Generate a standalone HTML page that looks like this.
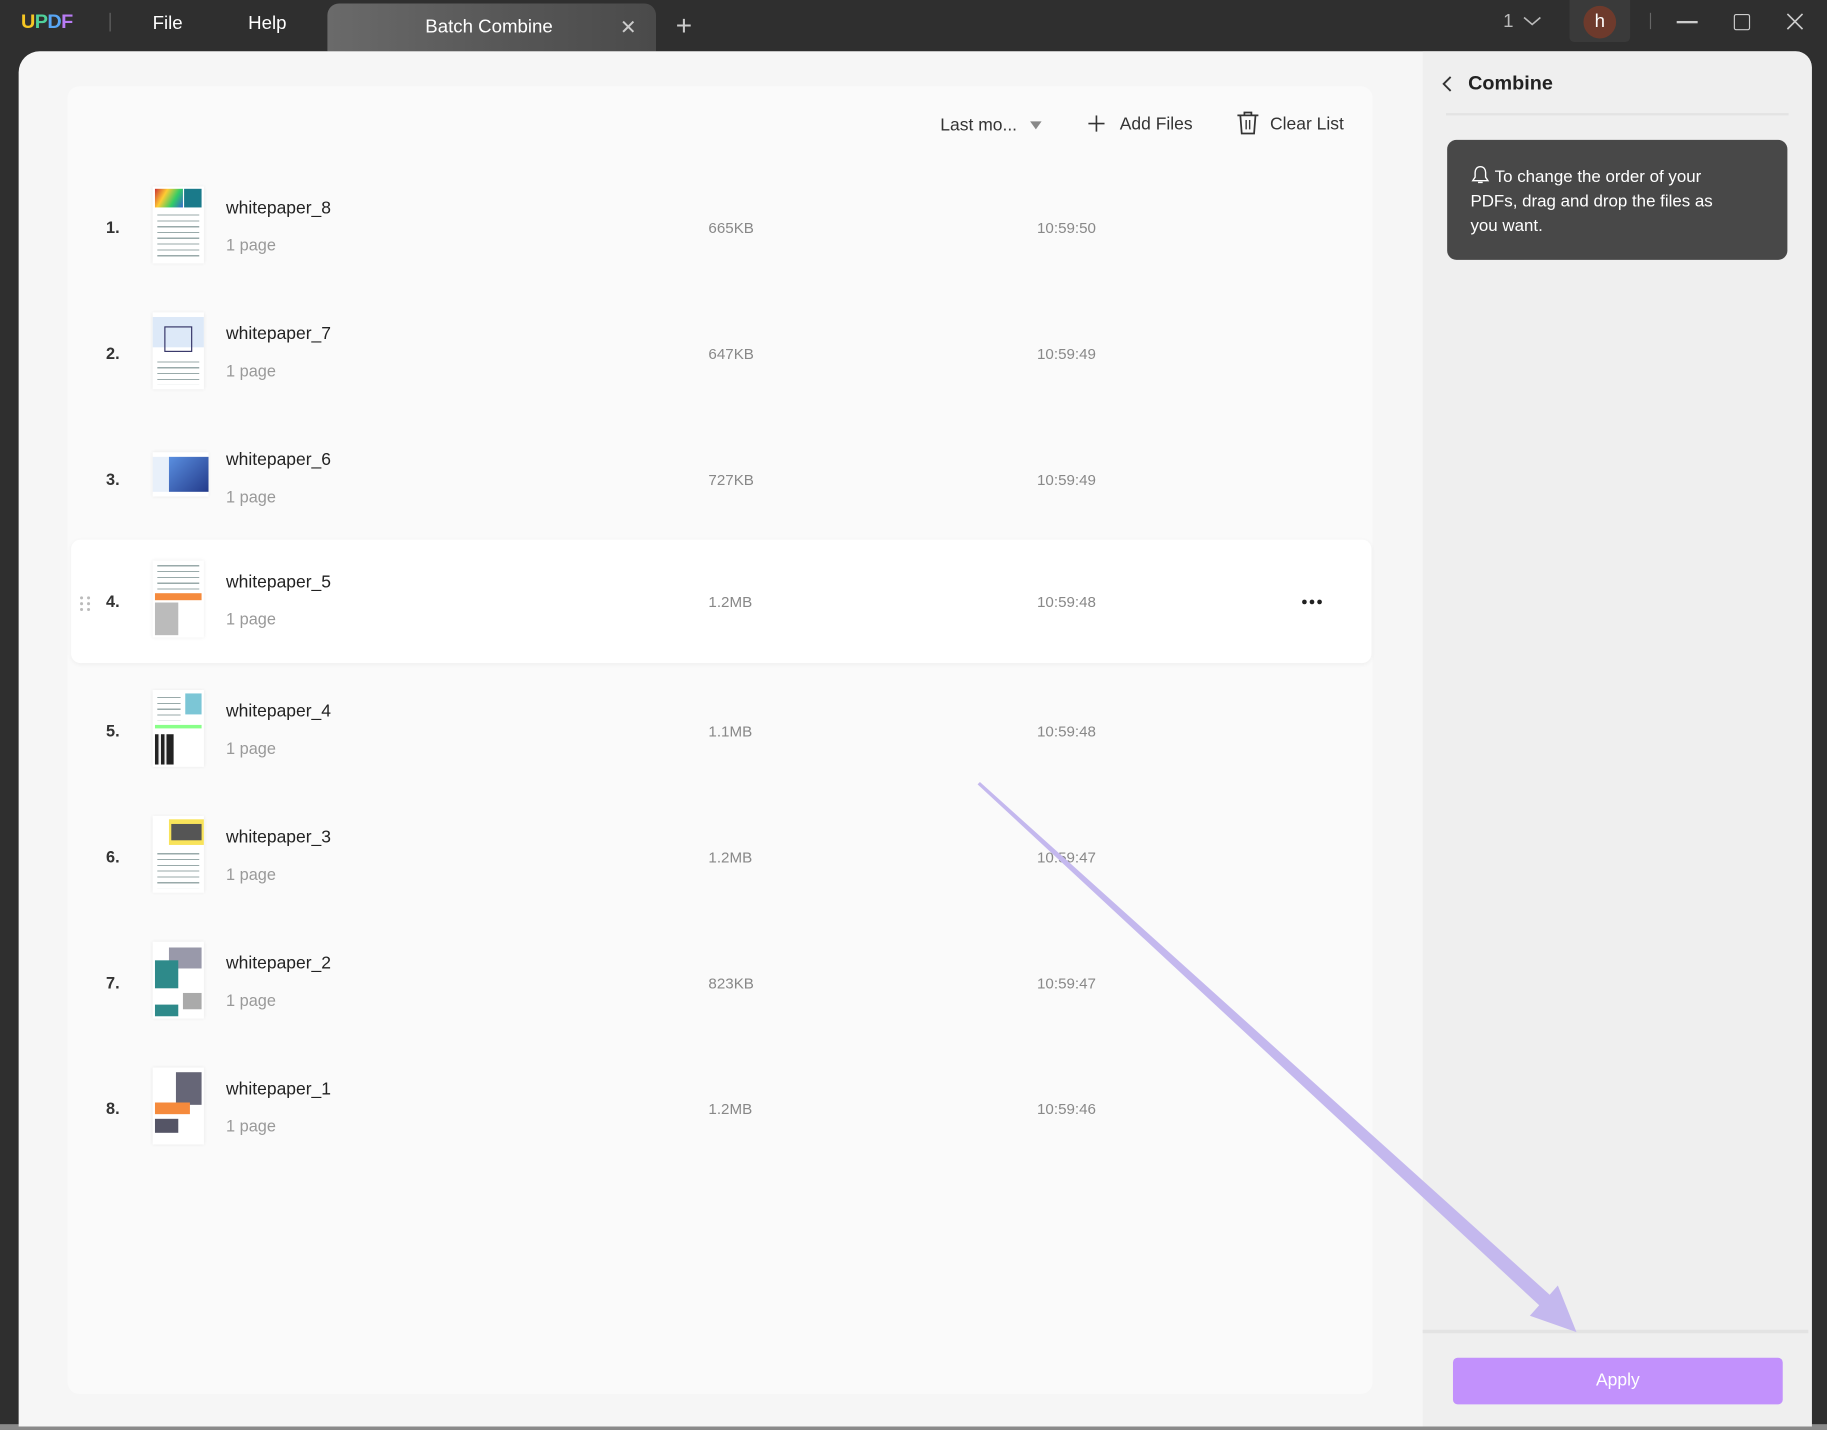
<!DOCTYPE html>
<html><head><meta charset="utf-8"><style>
html,body{margin:0;padding:0;width:1827px;height:1430px;overflow:hidden;background:#2f2f2f}
#s{position:absolute;left:0;top:0;width:1568px;height:1227px;transform:scale(1.16518,1.16544);transform-origin:0 0;font-family:"Liberation Sans",sans-serif;background:#2f2f2f}
.a{position:absolute}
.t{color:#fff;font-size:16px}
.row{position:absolute;left:61px;width:1116px;height:106px}
.num{position:absolute;left:30px;top:45px;font-size:14px;font-weight:bold;color:#333}
.th{position:absolute;left:70px;top:18px;width:44px;height:66px;background:#fff;box-shadow:0 0 3px rgba(0,0,0,.08);overflow:hidden}
.tx{position:absolute;left:4px;right:4px;height:40px;background:repeating-linear-gradient(#fff 0 2px,#9aa 2px 3px,#fff 3px 5px)}
.nm{position:absolute;left:133px;top:28px;font-size:15px;color:#222}
.pg{position:absolute;left:133px;top:60px;font-size:14px;color:#999}
.sz{position:absolute;left:547px;top:46px;font-size:13px;color:#888}
.tm{position:absolute;left:829px;top:46px;font-size:13px;color:#888}
</style></head><body><div id="s">
<div class="a" style="left:18px;top:9px;font-size:17px;font-weight:bold;letter-spacing:-0.5px"><span style="color:#f5c623">U</span><span style="color:#4fd19b">P</span><span style="color:#58a6f5">D</span><span style="color:#b97cf5">F</span></div>
<div class="a" style="left:94px;top:11px;width:1px;height:16px;background:#666"></div>
<div class="a t" style="left:131px;top:12px">File</div>
<div class="a t" style="left:213px;top:12px">Help</div>
<div class="a" style="left:281px;top:3px;width:282px;height:41px;border-radius:10px 10px 0 0;background:linear-gradient(90deg,#6a6a6a,#555 60%,#4a4a4a)"></div>
<div class="a t" style="left:365px;top:15px;font-size:16px">Batch Combine</div>
<div class="a t" style="left:532px;top:14px;font-size:17px;color:#ccc">✕</div>
<div class="a t" style="left:580px;top:9px;font-size:24px;color:#ccc;font-weight:300">+</div>
<div class="a t" style="left:1290px;top:10px;color:#bbb">1</div>
<svg class="a" style="left:1307px;top:13px" width="16" height="10"><path d="M1 2l7 6 7-6" stroke="#bbb" fill="none" stroke-width="1.4"/></svg>
<div class="a" style="left:1347px;top:0;width:52px;height:36px;background:#3a3a3a;border-radius:0 0 4px 4px"></div>
<div class="a" style="left:1359px;top:5px;width:28px;height:28px;border-radius:50%;background:#6e3a2c;color:#fff;font-size:16px;text-align:center;line-height:27px">h</div>
<div class="a" style="left:1416px;top:11px;width:1px;height:14px;background:#666"></div>
<div class="a" style="left:1439px;top:18px;width:18px;height:1.5px;background:#ccc"></div>
<div class="a" style="left:1488px;top:12px;width:12px;height:12px;border:1.5px solid #ccc;border-radius:2px"></div>
<svg class="a" style="left:1533px;top:11px" width="15" height="15"><path d="M1 1l13 13M14 1L1 14" stroke="#ccc" stroke-width="1.4"/></svg>
<div class="a" style="left:0;top:1222px;width:1568px;height:5px;background:#8a8a8a"></div>
<div class="a" style="left:16px;top:44px;width:1539px;height:1180px;background:#f6f6f6;border-radius:18px 14px 0 0;overflow:hidden">
  <div class="a" style="left:1205px;top:0;width:334px;height:1180px;background:#efefef"></div>
</div>
<div class="a" style="left:58px;top:74px;width:1120px;height:1122px;background:#fafafa;border-radius:10px"></div>
<div class="a" style="left:807px;top:99px;font-size:15px;color:#333">Last mo...</div>
<svg class="a" style="left:884px;top:104px" width="10" height="7"><path d="M0 0h10L5 7z" fill="#888"/></svg>
<svg class="a" style="left:934px;top:99px" width="14" height="14"><path d="M7 0v14M0 7h14" stroke="#333" stroke-width="1.4"/></svg>
<div class="a" style="left:961px;top:98px;font-size:15px;color:#333">Add Files</div>
<svg class="a" style="left:1061px;top:95px" width="20" height="21"><path d="M1 4h18M7 4V1.5h6V4M3.5 4l1.2 15.5h10.6L16.5 4" stroke="#333" stroke-width="1.5" fill="none"/><path d="M8.5 8v8M11.5 8v8" stroke="#333" stroke-width="1.2"/></svg>
<div class="a" style="left:1090px;top:98px;font-size:15px;color:#333">Clear List</div>
<div class="row" style="top:142px"><div class="num">1.</div><div class="th"><div class="a" style="left:2px;top:2px;width:24px;height:16px;background:linear-gradient(120deg,#c33,#fc3,#3c6,#36c)"></div><div class="a" style="left:27px;top:2px;width:15px;height:16px;background:#1a7a8a"></div><div class="tx" style="top:22px"></div></div><div class="nm">whitepaper_8</div><div class="pg">1 page</div><div class="sz">665KB</div><div class="tm">10:59:50</div></div>
<div class="row" style="top:250px"><div class="num">2.</div><div class="th"><div class="a" style="left:0;top:4px;width:44px;height:26px;background:#dde9f8"></div><div class="a" style="left:10px;top:12px;width:22px;height:20px;border:1px solid #336"></div><div class="tx" style="top:40px;height:22px"></div></div><div class="nm">whitepaper_7</div><div class="pg">1 page</div><div class="sz">647KB</div><div class="tm">10:59:49</div></div>
<div class="row" style="top:358px"><div class="num">3.</div><div class="th" style="top:30px;height:38px;width:48px"><div class="a" style="left:0;top:4px;width:14px;height:30px;background:#e8f0fa"></div><div class="a" style="left:14px;top:4px;width:34px;height:30px;background:linear-gradient(135deg,#5a8fe0,#233a8a)"></div></div><div class="nm">whitepaper_6</div><div class="pg">1 page</div><div class="sz">727KB</div><div class="tm">10:59:49</div></div>
<div class="row" style="top:463px;background:#fff;border-radius:8px;box-shadow:0 1px 4px rgba(0,0,0,.05)"><svg class="a" style="left:7px;top:48px" width="10" height="14"><g fill="#bbb"><circle cx="2" cy="2" r="1.3"/><circle cx="8" cy="2" r="1.3"/><circle cx="2" cy="7" r="1.3"/><circle cx="8" cy="7" r="1.3"/><circle cx="2" cy="12" r="1.3"/><circle cx="8" cy="12" r="1.3"/></g></svg><div class="num">4.</div><div class="th"><div class="tx" style="top:2px;height:24px"></div><div class="a" style="left:2px;top:28px;width:40px;height:6px;background:#f58a3c"></div><div class="a" style="left:2px;top:36px;width:20px;height:28px;background:#bbb"></div></div><div class="nm">whitepaper_5</div><div class="pg">1 page</div><div class="sz">1.2MB</div><div class="tm">10:59:48</div><svg class="a" style="left:1056px;top:51px" width="18" height="5"><g fill="#222"><circle cx="2.5" cy="2.5" r="2"/><circle cx="9" cy="2.5" r="2"/><circle cx="15.5" cy="2.5" r="2"/></g></svg></div>
<div class="row" style="top:574px"><div class="num">5.</div><div class="th"><div class="tx" style="top:4px;height:22px;right:20px"></div><div class="a" style="left:28px;top:3px;width:14px;height:18px;background:#7cc6d6"></div><div class="a" style="left:2px;top:30px;width:40px;height:3px;background:#8f8"></div><div class="a" style="left:2px;top:38px;width:16px;height:26px;background:linear-gradient(90deg,#222 0 3px,#eee 3px 5px,#222 5px 8px,#eee 8px 10px,#222 10px)"></div></div><div class="nm">whitepaper_4</div><div class="pg">1 page</div><div class="sz">1.1MB</div><div class="tm">10:59:48</div></div>
<div class="row" style="top:682px"><div class="num">6.</div><div class="th"><div class="a" style="left:14px;top:3px;width:30px;height:22px;background:#f8e35a"></div><div class="a" style="left:16px;top:7px;width:26px;height:14px;background:#555"></div><div class="tx" style="top:30px;height:32px"></div></div><div class="nm">whitepaper_3</div><div class="pg">1 page</div><div class="sz">1.2MB</div><div class="tm">10:59:47</div></div>
<div class="row" style="top:790px"><div class="num">7.</div><div class="th"><div class="a" style="left:14px;top:5px;width:28px;height:18px;background:#99a"></div><div class="a" style="left:2px;top:16px;width:20px;height:24px;background:#2e8a8a"></div><div class="a" style="left:2px;top:54px;width:20px;height:10px;background:#2e8a8a"></div><div class="a" style="left:26px;top:44px;width:16px;height:14px;background:#aaa"></div></div><div class="nm">whitepaper_2</div><div class="pg">1 page</div><div class="sz">823KB</div><div class="tm">10:59:47</div></div>
<div class="row" style="top:898px"><div class="num">8.</div><div class="th"><div class="a" style="left:20px;top:4px;width:22px;height:28px;background:#667"></div><div class="a" style="left:2px;top:30px;width:30px;height:10px;background:#f58a3c"></div><div class="a" style="left:2px;top:44px;width:20px;height:12px;background:#556"></div></div><div class="nm">whitepaper_1</div><div class="pg">1 page</div><div class="sz">1.2MB</div><div class="tm">10:59:46</div></div>
<svg class="a" style="left:1237px;top:65px" width="10" height="14"><path d="M8 1L2 7l6 6" stroke="#333" stroke-width="1.6" fill="none"/></svg>
<div class="a" style="left:1260px;top:62px;font-size:17px;font-weight:bold;color:#222">Combine</div>
<div class="a" style="left:1241px;top:97px;width:294px;height:2px;background:#e3e3e3"></div>
<div class="a" style="left:1242px;top:120px;width:292px;height:103px;background:#484848;border-radius:8px"></div>
<div class="a" style="left:1262px;top:141px;width:222px;font-size:14.5px;line-height:21px;color:#fff"><svg width="17" height="17" style="vertical-align:-2px"><path d="M8.5 2c-3 0-4.5 2.5-4.5 5v4l-2 3h13l-2-3V7c0-2.5-1.5-5-4.5-5zM6.5 15.5h4" stroke="#fff" stroke-width="1.2" fill="none"/></svg> To change the order of your PDFs, drag and drop the files as you want.</div>
<div class="a" style="left:1221px;top:1141px;width:331px;height:3px;background:#e3e3e3"></div>
<div class="a" style="left:1247px;top:1165px;width:283px;height:40px;background:#c291fc;border-radius:4px;color:#fff;font-size:15px;text-align:center;line-height:40px">Apply</div>
<svg class="a" style="left:0;top:0" width="1568" height="1227"><path d="M839 673L841 671L1330 1111L1337 1103L1353 1143L1313 1129L1321 1120Z" fill="#c4b8ee"/></svg>
</div></body></html>
